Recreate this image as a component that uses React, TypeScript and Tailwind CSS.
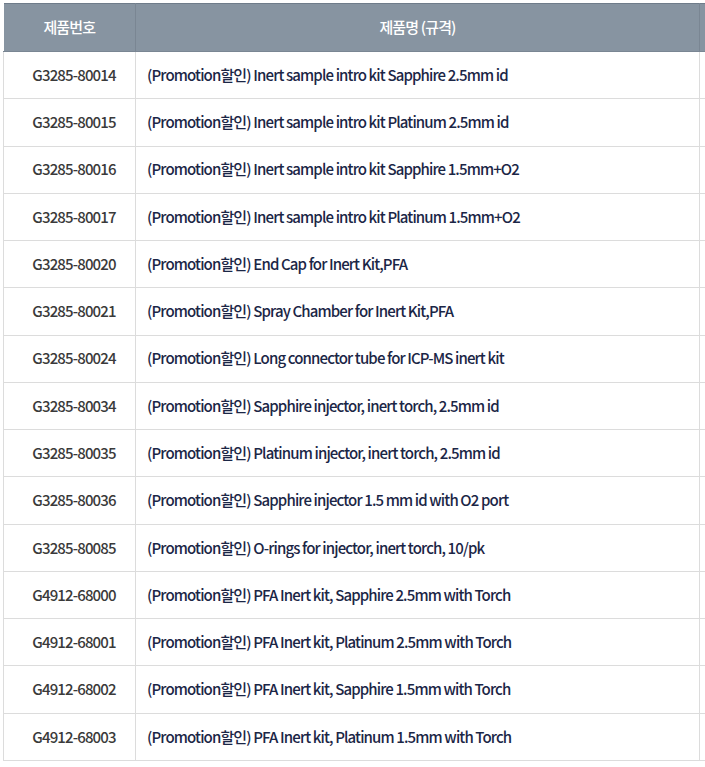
import React from 'react';

const rows: [string, string][] = [
  ['G3285-80014', 'Inert sample intro kit Sapphire 2.5mm id'],
  ['G3285-80015', 'Inert sample intro kit Platinum 2.5mm id'],
  ['G3285-80016', 'Inert sample intro kit Sapphire 1.5mm+O2'],
  ['G3285-80017', 'Inert sample intro kit Platinum 1.5mm+O2'],
  ['G3285-80020', 'End Cap for Inert Kit,PFA'],
  ['G3285-80021', 'Spray Chamber for Inert Kit,PFA'],
  ['G3285-80024', 'Long connector tube for ICP-MS inert kit'],
  ['G3285-80034', 'Sapphire injector, inert torch, 2.5mm id'],
  ['G3285-80035', 'Platinum injector, inert torch, 2.5mm id'],
  ['G3285-80036', 'Sapphire injector 1.5 mm id with O2 port'],
  ['G3285-80085', 'O-rings for injector, inert torch, 10/pk'],
  ['G4912-68000', 'PFA Inert kit, Sapphire 2.5mm with Torch'],
  ['G4912-68001', 'PFA Inert kit, Platinum 2.5mm with Torch'],
  ['G4912-68002', 'PFA Inert kit, Sapphire 1.5mm with Torch'],
  ['G4912-68003', 'PFA Inert kit, Platinum 1.5mm with Torch'],
];

const App: React.FC = () => {
  return (
    <div
      className="w-[705px] h-[767px] overflow-hidden bg-white pl-[3px] pt-[3px]"
      style={{ fontFamily: '"Noto Sans CJK KR", "Noto Sans", sans-serif' }}
    >
      <table className="w-[740px] table-fixed border-collapse text-[15px] tracking-[-0.058em] font-medium">
        <colgroup>
          <col className="w-[132px]" />
          <col className="w-[564px]" />
          <col />
        </colgroup>
        <thead>
          <tr className="h-[48px] bg-[#8794a1] text-white">
            <th className="border-t border-t-[#6f7c8a] border-b border-b-[#7a8693] border-r border-r-[#7a8693] font-medium">
              제품번호
            </th>
            <th className="border-t border-t-[#6f7c8a] border-b border-b-[#7a8693] border-r border-r-[#7a8693] font-medium">
              제품명 (규격)
            </th>
            <th className="border-t border-t-[#6f7c8a] border-b border-b-[#7a8693]" />
          </tr>
        </thead>
        <tbody>
          {rows.map(([code, name]) => (
            <tr key={code} className="h-[47.27px]">
              <td className="border border-[#dcdcdc] pl-[9px] text-center text-[#3a3a3a]">{code}</td>
              <td className="border border-[#dcdcdc] pl-[11px] text-[#1b2646]">
                (Promotion할인) {name}
              </td>
              <td className="border-b border-[#dcdcdc]" />
            </tr>
          ))}
        </tbody>
      </table>
    </div>
  );
};

export default App;
